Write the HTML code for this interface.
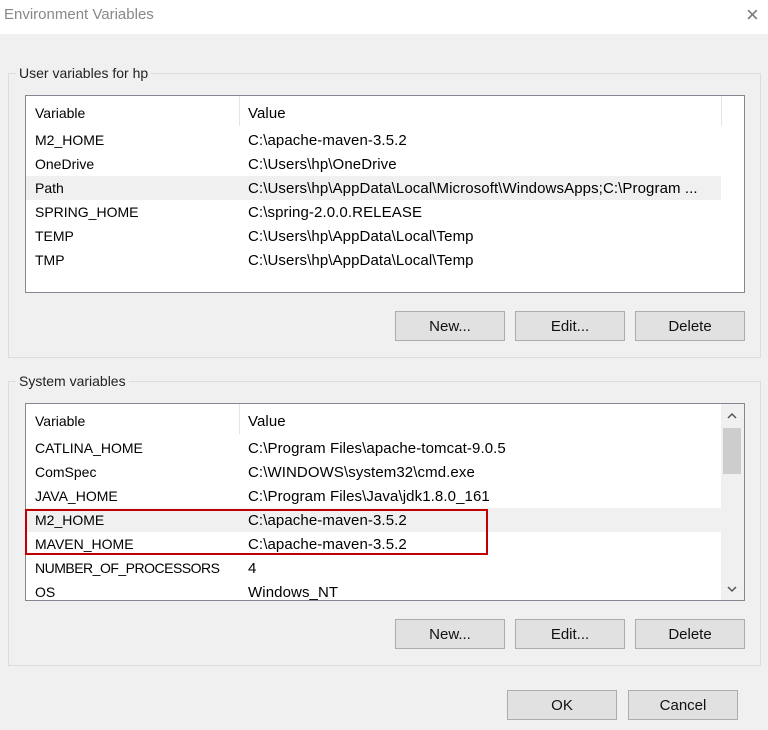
<!DOCTYPE html><html><head><style>
*{margin:0;padding:0;box-sizing:border-box}
body{width:768px;height:730px;background:#f0f0f0;font-family:"Liberation Sans",sans-serif;font-size:14px;color:#000;position:relative;overflow:hidden}
.a{position:absolute}
.title{left:0;top:0;width:768px;height:34px;background:#fff;}
.title span{position:absolute;left:4px;top:6px;color:#888;font-size:15px}
.grp{border:1px solid #dcdcdc;}
.lbl{background:#f0f0f0;padding:0 3px;font-size:14px;color:#222}
.list{background:#fff;border:1px solid #828790;overflow:hidden}
.row{position:absolute;left:0;height:24px;width:695px;line-height:24px}
.row .v{position:absolute;left:9px;top:0}.row .w{position:absolute;left:222px;top:1px;white-space:nowrap;font-size:15px;letter-spacing:0.1px;line-height:24px}
.btn{position:absolute;background:#e1e1e1;border:1px solid #adadad;text-align:center;line-height:30px;height:30px;width:110px;color:#111;font-size:15px}
</style></head><body>
<div class="a title"><span>Environment Variables</span><span style="left:746px;top:2px;color:#777;font-size:22px">×</span></div>

<div class="a grp" style="left:8px;top:73px;width:753px;height:285px"></div>
<div class="a lbl" style="left:16px;top:65px">User variables for hp</div>
<div class="a list" style="left:25px;top:95px;width:720px;height:198px">
 <div class="row" style="top:5px"><span class="v">Variable</span><span class="w">Value</span></div>
 <div class="a" style="left:213px;top:0;width:1px;height:30px;background:#e5e5e5"></div>
 <div class="a" style="left:695px;top:0;width:1px;height:30px;background:#e5e5e5"></div>
 <div class="row" style="top:32px"><span class="v">M2_HOME</span><span class="w">C:\apache-maven-3.5.2</span></div>
 <div class="row" style="top:56px"><span class="v">OneDrive</span><span class="w">C:\Users\hp\OneDrive</span></div>
 <div class="row" style="top:80px;background:#f0f0f0"><span class="v">Path</span><span class="w">C:\Users\hp\AppData\Local\Microsoft\WindowsApps;C:\Program ...</span></div>
 <div class="row" style="top:104px"><span class="v">SPRING_HOME</span><span class="w">C:\spring-2.0.0.RELEASE</span></div>
 <div class="row" style="top:128px"><span class="v">TEMP</span><span class="w">C:\Users\hp\AppData\Local\Temp</span></div>
 <div class="row" style="top:152px"><span class="v">TMP</span><span class="w">C:\Users\hp\AppData\Local\Temp</span></div>
</div>
<div class="btn" style="left:395px;top:311px">New...</div>
<div class="btn" style="left:515px;top:311px">Edit...</div>
<div class="btn" style="left:635px;top:311px">Delete</div>

<div class="a grp" style="left:8px;top:381px;width:753px;height:285px"></div>
<div class="a lbl" style="left:16px;top:373px">System variables</div>
<div class="a list" style="left:25px;top:403px;width:720px;height:198px">
 <div class="row" style="top:5px"><span class="v">Variable</span><span class="w">Value</span></div>
 <div class="a" style="left:213px;top:0;width:1px;height:30px;background:#e5e5e5"></div>
 <div class="row" style="top:32px"><span class="v">CATLINA_HOME</span><span class="w">C:\Program Files\apache-tomcat-9.0.5</span></div>
 <div class="row" style="top:56px"><span class="v">ComSpec</span><span class="w">C:\WINDOWS\system32\cmd.exe</span></div>
 <div class="row" style="top:80px"><span class="v">JAVA_HOME</span><span class="w">C:\Program Files\Java\jdk1.8.0_161</span></div>
 <div class="row" style="top:104px;background:#f0f0f0"><span class="v">M2_HOME</span><span class="w">C:\apache-maven-3.5.2</span></div>
 <div class="row" style="top:128px"><span class="v">MAVEN_HOME</span><span class="w">C:\apache-maven-3.5.2</span></div>
 <div class="row" style="top:152px"><span class="v" style="letter-spacing:-0.5px">NUMBER_OF_PROCESSORS</span><span class="w">4</span></div>
 <div class="row" style="top:176px"><span class="v">OS</span><span class="w">Windows_NT</span></div>
 <div class="a" style="left:695px;top:0;width:24px;height:196px;background:#f0f0f0"></div>
 <div class="a" style="left:697px;top:24px;width:18px;height:46px;background:#cdcdcd"></div>
 <svg class="a" style="left:701px;top:8px" width="10" height="8"><path d="M1 6 L5 2 L9 6" stroke="#555" stroke-width="1.5" fill="none"/></svg>
 <svg class="a" style="left:701px;top:181px" width="10" height="8"><path d="M1 2 L5 6 L9 2" stroke="#555" stroke-width="1.5" fill="none"/></svg>
</div>
<div class="a" style="left:25px;top:509px;width:463px;height:46px;border:2px solid #c00000"></div>
<div class="btn" style="left:395px;top:619px">New...</div>
<div class="btn" style="left:515px;top:619px">Edit...</div>
<div class="btn" style="left:635px;top:619px">Delete</div>

<div class="btn" style="left:507px;top:690px">OK</div>
<div class="btn" style="left:628px;top:690px">Cancel</div>
</body></html>
